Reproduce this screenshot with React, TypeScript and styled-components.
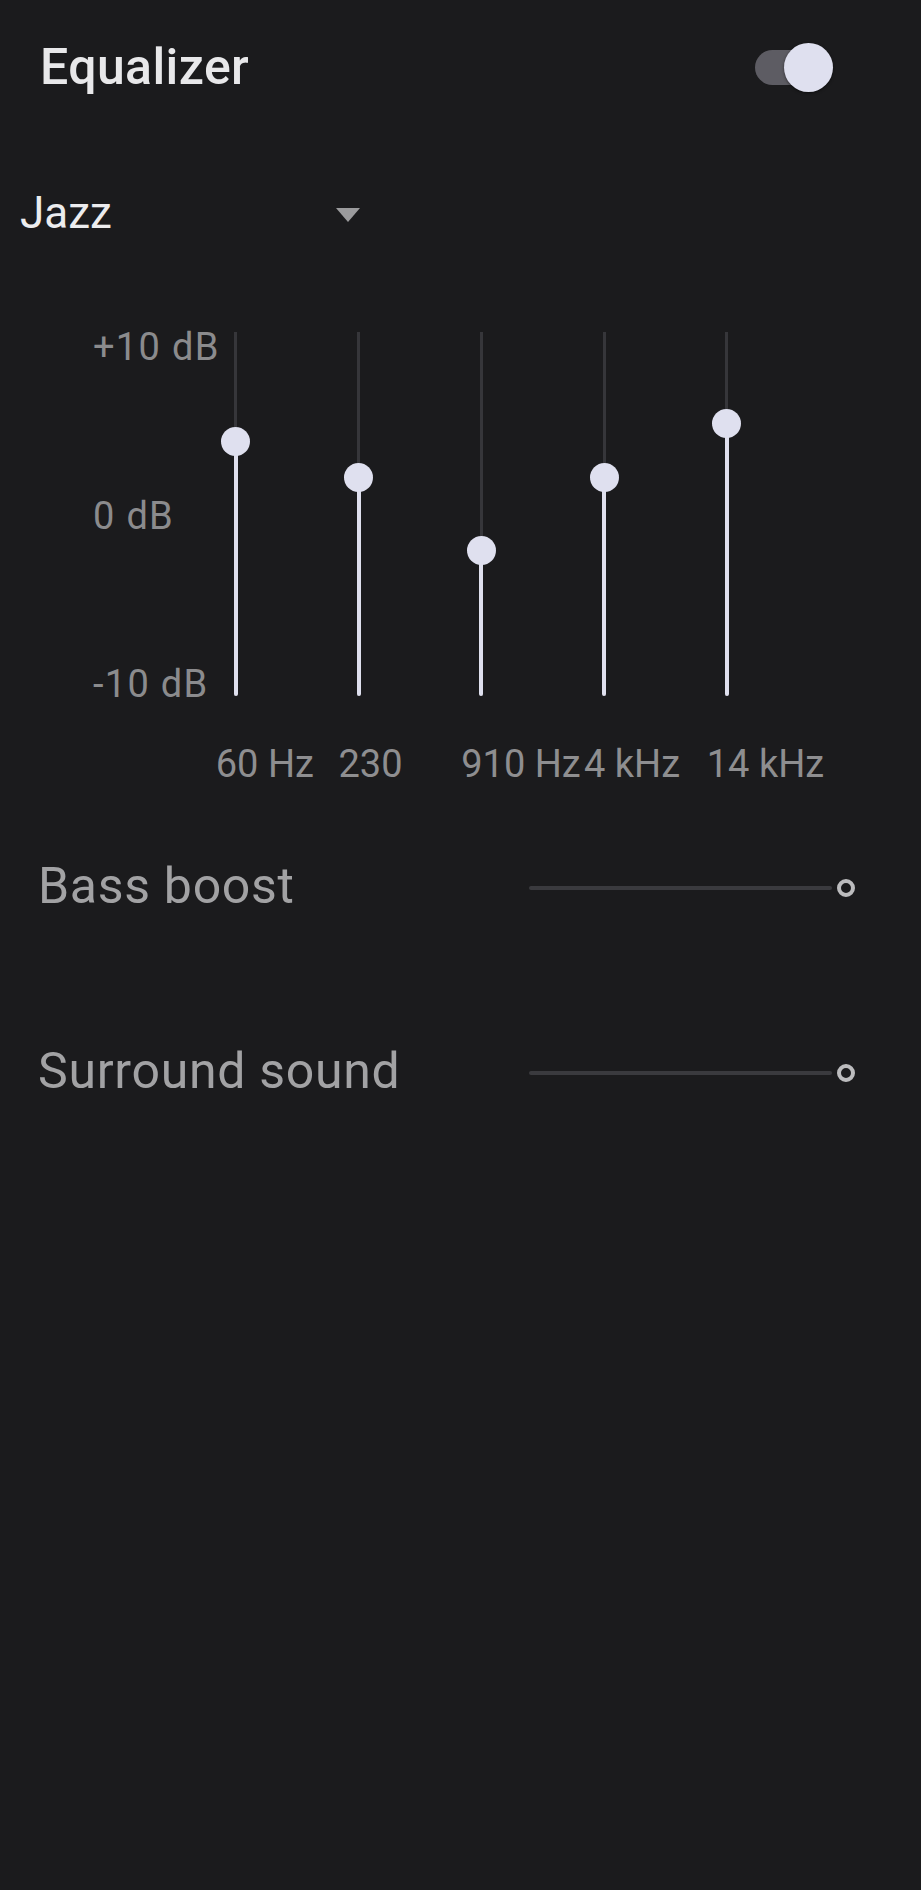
import styled, { createGlobalStyle } from "styled-components";

const GlobalStyle = createGlobalStyle`
  html, body {
    margin: 0;
    padding: 0;
    background: #1b1b1d;
  }
  * {
    box-sizing: border-box;
  }
`;

const Page = styled.div`
  width: 921px;
  min-height: 1890px;
  background: #1b1b1d;
  font-family: Roboto, "Noto Sans", sans-serif;
  overflow: hidden;
`;

const Header = styled.div`
  display: flex;
  align-items: center;
  justify-content: space-between;
  height: 134px;
  padding: 0 88px 0 40px;
`;

const Title = styled.h1`
  margin: 0;
  font-size: 50px;
  line-height: 1;
  font-weight: 500;
  letter-spacing: 0.4px;
  color: #e8e8ea;
`;

const Switch = styled.div`
  position: relative;
  width: 78px;
  height: 49px;
  display: flex;
  align-items: center;
`;

const SwitchTrack = styled.div`
  width: 74px;
  height: 35px;
  border-radius: 18px;
  background: #5d5c63;
`;

const SwitchThumb = styled.div`
  position: absolute;
  right: 0;
  top: 0;
  width: 49px;
  height: 49px;
  border-radius: 50%;
  background: #dfe0ef;
  box-shadow: 0 1px 3px rgba(0, 0, 0, 0.5);
`;

const Preset = styled.div`
  display: flex;
  align-items: center;
  justify-content: space-between;
  width: 340px;
  height: 60px;
  margin: 49px 0 0 20px;
`;

const PresetName = styled.span`
  font-size: 44px;
  line-height: 1;
  color: #ececee;
`;

const Caret = styled.span`
  width: 0;
  height: 0;
  margin-top: 4px;
  border-left: 12.5px solid transparent;
  border-right: 12.5px solid transparent;
  border-top: 14px solid #9b9b9d;
`;

const EqGrid = styled.div`
  display: grid;
  grid-template-columns: repeat(6, 122.75px);
  grid-template-rows: 364px 44px;
  row-gap: 46px;
  margin-top: 89px;
  padding-left: 93px;
`;

const ScaleColumn = styled.div`
  display: flex;
  flex-direction: column;
  justify-content: space-between;
  padding-top: 3px;
  font-size: 38px;
  line-height: 24px;
  letter-spacing: 1.3px;
  color: #8b8b8d;
`;

const ScaleLabel = styled.span`
  white-space: nowrap;
`;

const BandColumn = styled.div`
  display: flex;
`;

const BandTrack = styled.div`
  position: relative;
  width: 40px;
  height: 364px;
`;

const RailLine = styled.div`
  position: absolute;
  left: 50%;
  top: 0;
  bottom: 0;
  width: 3px;
  margin-left: -1.5px;
  background: #36363a;
`;

const ActiveLine = styled.div`
  position: absolute;
  left: 50%;
  bottom: 0;
  width: 4px;
  margin-left: -2px;
  border-radius: 2px;
  background: #dfe0ee;
`;

const BandThumb = styled.div`
  position: absolute;
  left: 50%;
  width: 29px;
  height: 29px;
  margin: -14.5px 0 0 -14.5px;
  border-radius: 50%;
  background: #dfe0ef;
`;

const FreqLabel = styled.span`
  font-size: 38px;
  line-height: 44px;
  color: #8e8e90;
  white-space: nowrap;
`;

const EffectRow = styled.div<{ $gap: number }>`
  display: flex;
  align-items: center;
  justify-content: space-between;
  height: 100px;
  margin-top: ${(p) => p.$gap}px;
  padding: 0 66px 0 38px;
`;

const EffectName = styled.span`
  font-size: 50px;
  line-height: 1;
  letter-spacing: 0.7px;
  color: #a2a2a4;
`;

const EffectSlider = styled.div`
  display: flex;
  align-items: center;
  gap: 5px;
  width: 326px;
  margin-top: 4px;
`;

const EffectLine = styled.div`
  flex: 1;
  height: 4px;
  border-radius: 2px;
  background: #3a3a3e;
`;

const EffectKnob = styled.div`
  width: 18px;
  height: 18px;
  border-radius: 50%;
  border: 4px solid #bcbcbe;
`;

const bands = [
  { label: "60 Hz", value: 4 },
  { label: "230", value: 2 },
  { label: "910 Hz", value: -2 },
  { label: "4 kHz", value: 2 },
  { label: "14 kHz", value: 5 },
];

const TRACK = 364;

const toY = (db: number) => TRACK / 2 - (db * TRACK) / 20;

const App: React.FC = () => {
  return (
    <Page>
      <GlobalStyle />
      <Header>
        <Title>Equalizer</Title>
        <Switch>
          <SwitchTrack />
          <SwitchThumb />
        </Switch>
      </Header>

      <Preset>
        <PresetName>Jazz</PresetName>
        <Caret />
      </Preset>

      <EqGrid>
        <ScaleColumn>
          <ScaleLabel>+10 dB</ScaleLabel>
          <ScaleLabel>0 dB</ScaleLabel>
          <ScaleLabel>-10 dB</ScaleLabel>
        </ScaleColumn>
        {bands.map((b) => (
          <BandColumn key={b.label}>
            <BandTrack>
              <RailLine />
              <ActiveLine style={{ height: TRACK - toY(b.value) }} />
              <BandThumb style={{ top: toY(b.value) }} />
            </BandTrack>
          </BandColumn>
        ))}
        <div />
        {bands.map((b) => (
          <FreqLabel key={b.label}>{b.label}</FreqLabel>
        ))}
      </EqGrid>

      <EffectRow $gap={50}>
        <EffectName>Bass boost</EffectName>
        <EffectSlider>
          <EffectLine />
          <EffectKnob />
        </EffectSlider>
      </EffectRow>
      <EffectRow $gap={85}>
        <EffectName>Surround sound</EffectName>
        <EffectSlider>
          <EffectLine />
          <EffectKnob />
        </EffectSlider>
      </EffectRow>
    </Page>
  );
};

export default App;
